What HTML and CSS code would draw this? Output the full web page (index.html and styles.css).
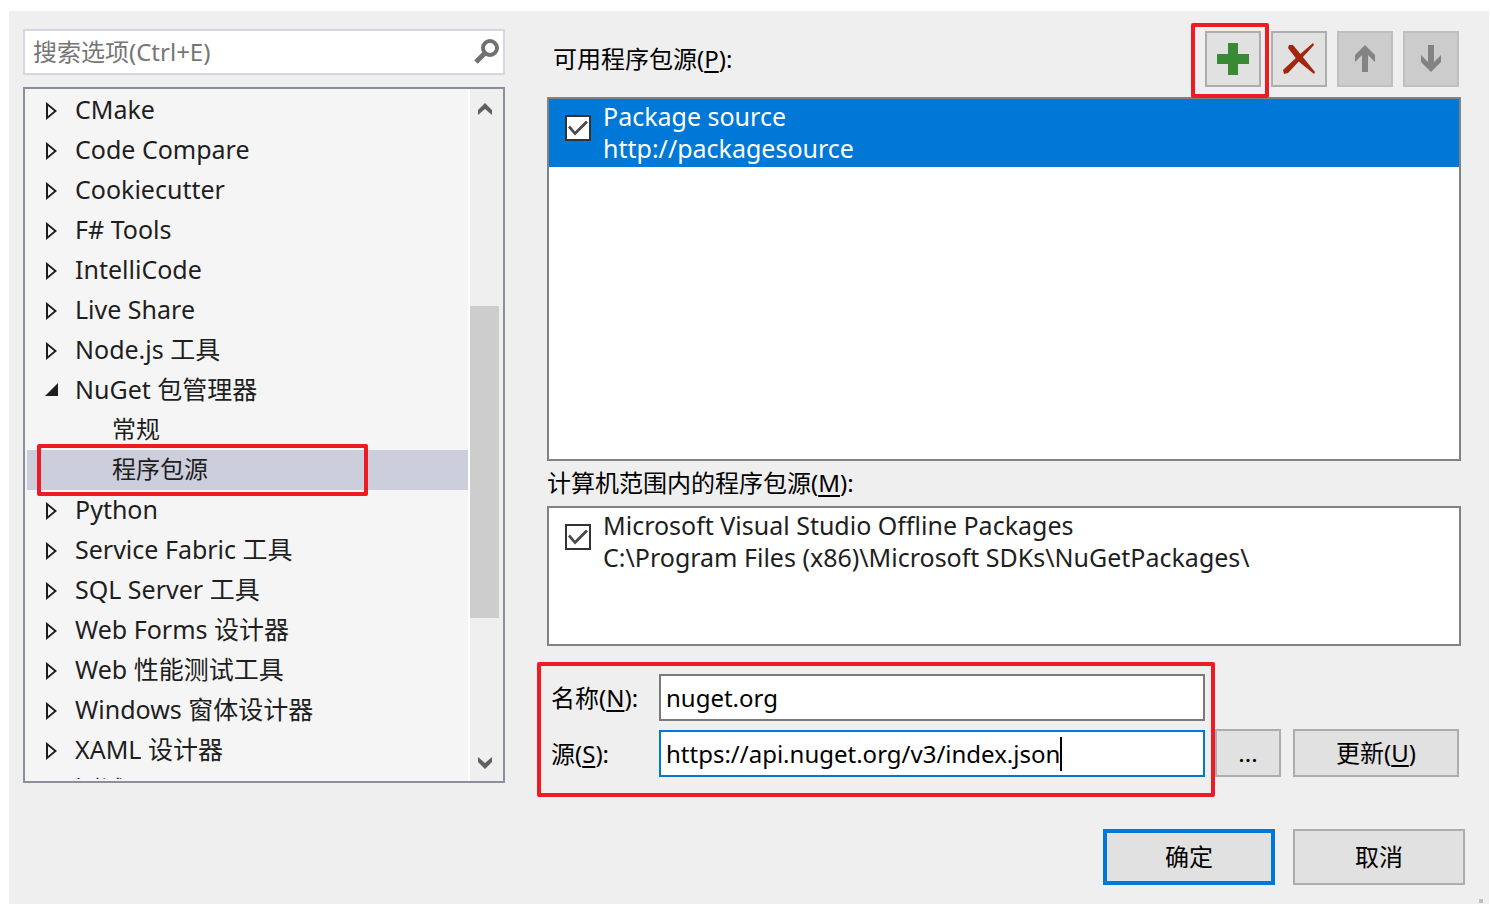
FILE: index.html
```html
<!DOCTYPE html>
<html lang="zh-CN">
<head>
    <meta charset="UTF-8">
    <meta name="viewport" content="width=device-width, initial-scale=1.0">
    <title>选项</title>
    <link rel="stylesheet" href="styles.css">
</head>
<body>
    <form class="dialog">
        <div class="columns">
            <div class="sidebar">
                <div class="search">
                    <input type="text" class="search-input" placeholder="搜索选项(Ctrl+E)" aria-label="搜索选项">
                    <svg class="search-icon" viewBox="0 0 28 28" fill="none" stroke="#717171"><circle cx="17" cy="10" r="7" stroke-width="4"/><path d="M12 15L3 24" stroke-width="5"/></svg>
                </div>
                <div class="tree">
                    <ul class="tree-list">
                        <li class="node">CMake</li>
                        <li class="node">Code Compare</li>
                        <li class="node">Cookiecutter</li>
                        <li class="node">F# Tools</li>
                        <li class="node">IntelliCode</li>
                        <li class="node">Live Share</li>
                        <li class="node">Node.js 工具</li>
                        <li class="node open">NuGet 包管理器</li>
                        <li class="node child">常规</li>
                        <li class="node child selected"><span class="mark mark-node"></span>程序包源</li>
                        <li class="node">Python</li>
                        <li class="node">Service Fabric 工具</li>
                        <li class="node">SQL Server 工具</li>
                        <li class="node">Web Forms 设计器</li>
                        <li class="node">Web 性能测试工具</li>
                        <li class="node">Windows 窗体设计器</li>
                        <li class="node">XAML 设计器</li>
                        <li class="node">测试</li>
                    </ul>
                    <div class="scrollbar">
                        <svg class="arrow" viewBox="0 0 16 14" fill="#606060"><path d="M8 1L15 8V13L8 7L1 13V8z"/></svg>
                        <div class="track"><div class="thumb"></div></div>
                        <svg class="arrow" viewBox="0 0 16 14" fill="#606060"><path d="M8 13L15 6V1L8 7L1 1V6z"/></svg>
                    </div>
                </div>
            </div>

            <div class="main">
                <div class="toolbar">
                    <span class="toolbar-label">可用程序包源(<u>P</u>):</span>
                    <button type="button" class="tool" aria-label="添加"><span class="mark mark-tool"></span><svg viewBox="0 0 32 32"><path d="M11 0h10v11h11v10H21v11H11V21H0V11h11z" fill="#388a34"/></svg></button>
                    <button type="button" class="tool" aria-label="删除"><svg viewBox="0 0 32 32" fill="#a1260d"><path d="M5 5L6 2L10 2L19 13L32 29L31 31L15 18z"/><path d="M30 0L31 2L19 15L5 30L1 31L0 27L15 13z"/></svg></button>
                    <button type="button" class="tool" aria-label="上移" disabled><svg viewBox="0 0 32 32" fill="#838383"><path d="M16 2L26 12V19L19 12V29H13V12L6 19V12z"/></svg></button>
                    <button type="button" class="tool" aria-label="下移" disabled><svg viewBox="0 0 32 32" fill="#838383"><path d="M16 29L26 19V12L19 19V2H13V19L6 12V19z"/></svg></button>
                </div>

                <div class="list sources">
                    <label class="source active">
                        <input type="checkbox" class="check" checked>
                        <span>Package source<br>http://packagesource</span>
                    </label>
                </div>

                <div class="list-label">计算机范围内的程序包源(<u>M</u>):</div>
                <div class="list machine">
                    <label class="source">
                        <input type="checkbox" class="check" checked>
                        <span>Microsoft Visual Studio Offline Packages<br>C:\Program Files (x86)\Microsoft SDKs\NuGetPackages\</span>
                    </label>
                </div>

                <div class="fields">
                    <div class="mark-fields">
                        <label for="name">名称(<u>N</u>):</label>
                        <div class="field"><input type="text" id="name" value="nuget.org"></div>
                        <label for="source">源(<u>S</u>):</label>
                        <div class="field focused"><input type="text" id="source" value="https://api.nuget.org/v3/index.json"><span class="caret"></span></div>
                    </div>
                    <button type="button" class="button browse">...</button>
                    <button type="button" class="button update">更新(<u>U</u>)</button>
                </div>
            </div>
        </div>

        <div class="footer">
            <button type="submit" class="button big primary">确定</button>
            <button type="button" class="button big">取消</button>
        </div>
        <span class="grip"></span>
    </form>
</body>
</html>
```
FILE: styles.css
```css
* {
    box-sizing: border-box;
}

body {
    margin: 0;
    padding: 11px 1px 0 9px;
    min-height: 100vh;
    display: flex;
    background-color: #fff;
    color: #1e1e1e;
    font-family: "Noto Sans", "Noto Sans CJK SC", sans-serif;
    font-size: 24px;
    line-height: 32px;
}

input,
button {
    font: inherit;
    color: inherit;
}

u {
    text-decoration-thickness: 2px;
    text-underline-offset: 3px;
}

.dialog {
    position: relative;
    flex: 1;
    padding: 12px 24px 19px 14px;
    display: flex;
    flex-direction: column;
    justify-content: space-between;
    background-color: #efefef;
}

.columns {
    padding-right: 4px;
    display: flex;
    gap: 42px;
}

/* left side: search and tree */
.sidebar {
    flex: 0 0 482px;
    padding-top: 6px;
    display: flex;
    flex-direction: column;
    gap: 12px;
}

.search {
    height: 46px;
    padding: 0 2px 0 8px;
    display: flex;
    align-items: center;
    border: 2px solid #d5d6e3;
    background-color: #fff;
}

.search-input {
    flex: 1;
    min-width: 0;
    padding: 0;
    border: none;
    outline: none;
    background: none;
}

.search-input::placeholder {
    color: #767676;
}

.search-icon {
    width: 28px;
    height: 28px;
}

.tree {
    height: 696px;
    display: flex;
    overflow: hidden;
    border: 2px solid #8b8f99;
    background-color: #f5f5f5;
}

.tree-list {
    flex: 1;
    margin: 0 0 2px;
    padding: 1px 0 0 2px;
    overflow: hidden;
    list-style: none;
    font-size: 25px;
}

.node {
    position: relative;
    height: 40px;
    padding-left: 48px;
    line-height: 38px;
}

.node::before {
    content: "";
    position: absolute;
    left: 19px;
    top: 12px;
    width: 11px;
    height: 18px;
    background-color: #1e1e1e;
    clip-path: polygon(evenodd, 0 0, 100% 50%, 0 100%, 0 0, 2px 4px, 2px 14px, 8px 9px, 2px 4px);
}

.node.open::before {
    left: 18px;
    top: 13px;
    width: 13px;
    height: 13px;
    clip-path: polygon(100% 0, 100% 100%, 0 100%);
}

.node.child {
    padding-left: 85px;
    font-size: 24px;
}

.node.child::before {
    display: none;
}

.node.selected {
    background-color: #cccedb;
}

.scrollbar {
    width: 35px;
    padding: 13px 4px 11px 0;
    display: flex;
    flex-direction: column;
    align-items: center;
    border-left: 2px solid #fff;
    background-color: #efefef;
}

.arrow {
    width: 16px;
    height: 14px;
}

.track {
    flex: 1;
    width: 100%;
    padding-top: 190px;
}

.thumb {
    height: 312px;
    background-color: #cdcdcd;
}

/* red highlight frames */
.mark {
    position: absolute;
    border: 4px solid #ed1c24;
    border-radius: 2px;
    z-index: 1;
}

.mark-node {
    left: 10px;
    top: -6px;
    width: 331px;
    height: 52px;
}

.mark-tool {
    left: -16px;
    top: -10px;
    width: 78px;
    height: 75px;
}

/* right side */
.main {
    flex: 1;
    min-width: 0;
    color: #000;
}

.toolbar {
    padding: 8px 2px 10px 6px;
    display: flex;
    align-items: center;
    gap: 10px;
}

.toolbar-label {
    flex: 1;
}

.tool {
    position: relative;
    width: 56px;
    height: 56px;
    padding: 0;
    display: flex;
    align-items: center;
    justify-content: center;
    border: 2px solid #adadad;
    background-color: #e1e1e1;
}

.tool svg {
    width: 32px;
    height: 32px;
}

.tool:disabled {
    border-color: #bfbfbf;
    background-color: #ccc;
}

.list {
    border: 2px solid #828282;
    background-color: #fff;
}

.sources {
    height: 364px;
}

.machine {
    height: 140px;
}

.source {
    height: 68px;
    padding: 1px 16px;
    display: flex;
    align-items: flex-start;
    gap: 12px;
    color: #1e1e1e;
    font-size: 25px;
}

.source.active {
    background-color: #0078d7;
    color: #fff;
}

.check {
    appearance: none;
    width: 26px;
    height: 26px;
    margin: 15px 0 0;
    display: grid;
    place-items: center;
    border: 2px solid #333;
    background-color: #fff;
}

.check:checked::before {
    content: "";
    width: 20px;
    height: 15px;
    background-color: #4a4a4a;
    clip-path: polygon(0 7px, 2px 5px, 7px 11px, 18px 0, 20px 2px, 7px 15px);
}

.list-label {
    padding: 6px 0 7px;
}

.fields {
    margin: 16px 2px 0 -10px;
    display: flex;
    align-items: flex-end;
}

.mark-fields {
    flex: 1;
    padding: 8px 6px 16px 10px;
    display: grid;
    grid-template-columns: 108px 1fr;
    row-gap: 9px;
    align-items: center;
    border: 4px solid #ed1c24;
    border-radius: 2px;
}

.field {
    height: 47px;
    padding-left: 5px;
    display: flex;
    align-items: center;
    border: 2px solid #7a7a7a;
    background-color: #fff;
}

.field.focused {
    border-color: #0078d7;
}

.field input {
    field-sizing: content;
    padding: 0;
    border: none;
    outline: none;
    background: none;
}

.caret {
    width: 2px;
    height: 34px;
    background-color: #000;
}

.button {
    padding: 0;
    height: 48px;
    border: 2px solid #adadad;
    background-color: #e1e1e1;
    color: #000;
}

.browse {
    width: 66px;
    margin-bottom: 20px;
}

.update {
    width: 166px;
    margin: 0 0 20px 12px;
}

.footer {
    display: flex;
    justify-content: flex-end;
    gap: 18px;
}

.button.big {
    width: 172px;
    height: 56px;
}

.button.primary {
    border: 4px solid #0078d7;
}

.grip {
    position: absolute;
    right: 6px;
    bottom: 1px;
    width: 4px;
    height: 4px;
    background-color: #bfbfbf;
}
```
